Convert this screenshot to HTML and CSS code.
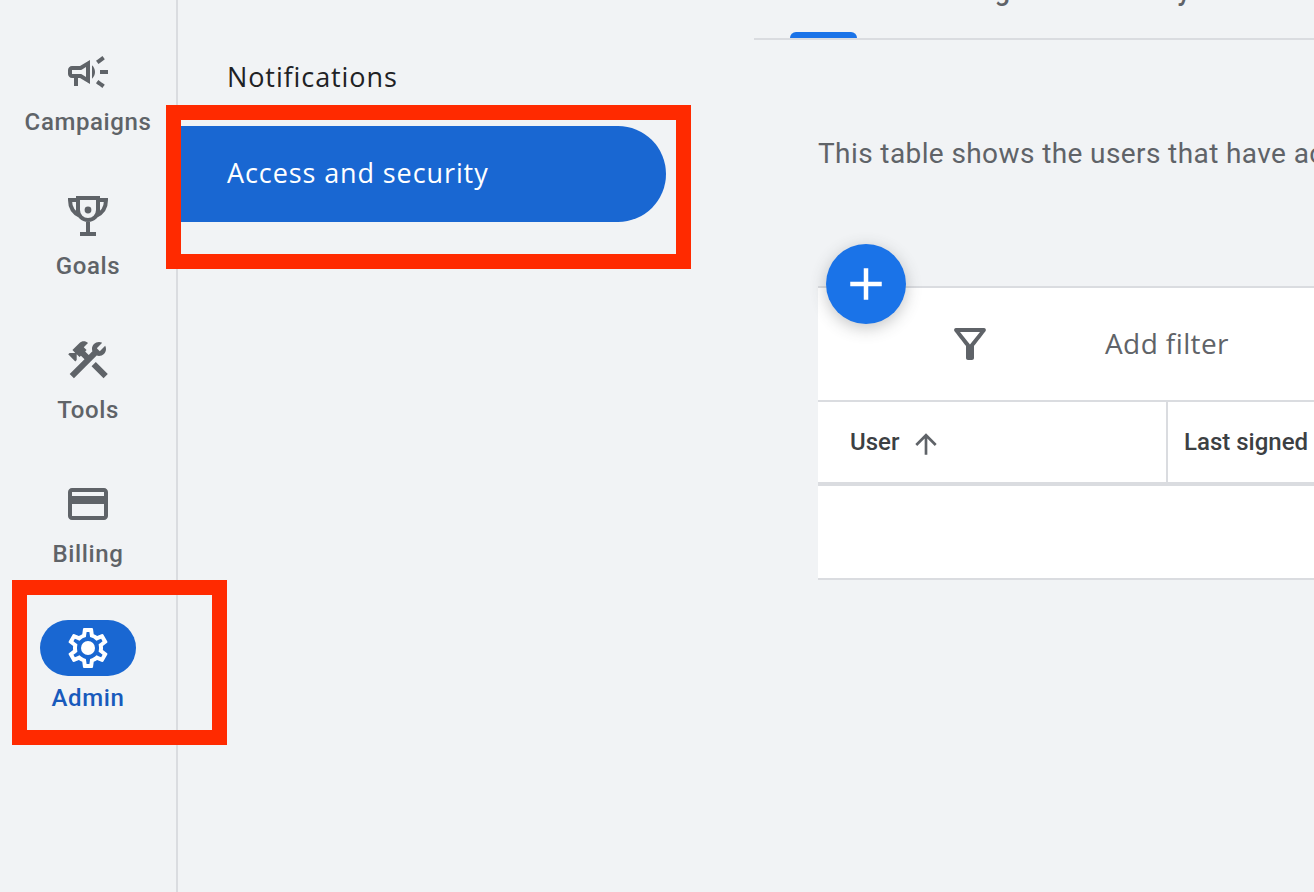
FILE: index.html
```html
<!DOCTYPE html>
<html lang="en">
<head>
    <meta charset="UTF-8">
    <meta name="viewport" content="width=device-width, initial-scale=1.0">
    <title>Access and security</title>
    <link rel="stylesheet" href="styles.css">
</head>
<body>
    <nav class="rail">
        <div class="rail-item">
            <div class="rail-icon">
                <svg class="icon" viewBox="0 0 24 24"><path d="M18 11v2h4v-2h-4zm-2 6.61c.96.71 2.21 1.65 3.2 2.39.4-.53.8-1.07 1.2-1.6-.99-.74-2.24-1.68-3.2-2.4-.4.54-.8 1.08-1.2 1.61zM20.4 5.6c-.4-.53-.8-1.07-1.2-1.6-.99.74-2.24 1.68-3.2 2.4.4.53.8 1.07 1.2 1.6.96-.72 2.21-1.65 3.2-2.4zM4 9c-1.1 0-2 .9-2 2v2c0 1.1.9 2 2 2h1v4h2v-4h1l5 3V6L8 9H4zm5.03 1.71L11 9.53v4.94l-1.97-1.18-.48-.29H4v-2h4.55l.48-.29zM15.5 12c0-1.33-.58-2.53-1.5-3.35v6.69c.92-.81 1.5-2.01 1.5-3.34z"/></svg>
            </div>
            <div class="rail-label">Campaigns</div>
        </div>
        <div class="rail-item">
            <div class="rail-icon">
                <svg class="icon" viewBox="0 0 24 24"><path class="trophy" d="M7 3h10v6c0 2.8-2.2 5-5 5s-5-2.2-5-5zM7 4H3c0 3.6 1.6 6.4 5 8M17 4h4c0 3.6-1.6 6.4-5 8M12 14v7M8 21h8"/><circle cx="12" cy="9" r="1.7"/></svg>
            </div>
            <div class="rail-label">Goals</div>
        </div>
        <div class="rail-item">
            <div class="rail-icon">
                <svg class="icon" viewBox="0 0 24 24"><path d="M13.783 15.172l2.121-2.121 5.996 5.996-2.121 2.121zM17.5 10c1.93 0 3.5-1.57 3.5-3.5 0-.58-.16-1.12-.41-1.6l-2.7 2.7-1.49-1.49 2.7-2.7c-.48-.25-1.02-.41-1.6-.41C15.57 3 14 4.57 14 6.5c0 .41.08.8.21 1.16l-1.85 1.85-1.78-1.78.71-.71-1.41-1.41L12 3.49c-1.17-1.17-3.07-1.17-4.24 0L4.22 7.03l1.41 1.41H2.81l-.71.71 3.54 3.54.71-.71V9.15l1.41 1.41.71-.71 1.78 1.78-7.41 7.41 2.12 2.12L16.34 9.79c.36.13.75.21 1.16.21z"/></svg>
            </div>
            <div class="rail-label">Tools</div>
        </div>
        <div class="rail-item">
            <div class="rail-icon">
                <svg class="icon" viewBox="0 0 24 24"><path d="M20 4H4c-1.11 0-1.99.89-1.99 2L2 18c0 1.11.89 2 2 2h16c1.11 0 2-.89 2-2V6c0-1.11-.89-2-2-2zm0 14H4v-6h16v6zm0-10H4V6h16v2z"/></svg>
            </div>
            <div class="rail-label">Billing</div>
        </div>
        <div class="rail-item active">
            <div class="rail-icon">
                <svg class="icon" viewBox="0 0 24 24"><path d="M19.43 12.98c.04-.32.07-.64.07-.98 0-.34-.03-.66-.07-.98l2.11-1.65c.19-.15.24-.42.12-.64l-2-3.46c-.09-.16-.26-.25-.44-.25-.06 0-.12.01-.17.03l-2.49 1c-.52-.4-1.08-.73-1.69-.98l-.38-2.65C14.46 2.18 14.25 2 14 2h-4c-.25 0-.46.18-.49.42l-.38 2.65c-.61.25-1.17.59-1.69.98l-2.49-1c-.06-.02-.12-.03-.18-.03-.17 0-.34.09-.43.25l-2 3.46c-.13.22-.07.49.12.64l2.11 1.65c-.04.32-.07.65-.07.98 0 .33.03.66.07.98l-2.11 1.65c-.19.15-.24.42-.12.64l2 3.46c.09.16.26.25.44.25.06 0 .12-.01.17-.03l2.49-1c.52.4 1.08.73 1.69.98l.38 2.65c.03.24.24.42.49.42h4c.25 0 .46-.18.49-.42l.38-2.65c.61-.25 1.17-.59 1.69-.98l2.49 1c.06.02.12.03.18.03.17 0 .34-.09.43-.25l2-3.46c.12-.22.07-.49-.12-.64l-2.11-1.65zm-1.98-1.71c.04.31.05.52.05.73 0 .21-.02.43-.05.73l-.14 1.13.89.7 1.08.84-.7 1.21-1.27-.51-1.04-.42-.9.68c-.43.32-.84.56-1.25.73l-1.06.43-.16 1.13-.2 1.35h-1.4l-.19-1.35-.16-1.13-1.06-.43c-.43-.18-.83-.41-1.23-.71l-.91-.7-1.06.43-1.27.51-.7-1.21 1.08-.84.89-.7-.14-1.13c-.03-.31-.05-.54-.05-.74s.02-.43.05-.73l.14-1.13-.89-.7-1.08-.84.7-1.21 1.27.51 1.04.42.9-.68c.43-.32.84-.56 1.25-.73l1.06-.43.16-1.13.2-1.35h1.39l.19 1.35.16 1.13 1.06.43c.43.18.83.41 1.23.71l.91.7 1.06-.43 1.27-.51.7 1.21-1.07.85-.89.7.14 1.13z"/><circle cx="12" cy="12" r="3.5"/></svg>
            </div>
            <div class="rail-label">Admin</div>
        </div>
    </nav>

    <aside class="side">
        <div class="side-item">Notifications</div>
        <div class="side-item selected">Access and security</div>
    </aside>

    <main class="main">
        <div class="tabs">
            <div class="tab current">Users</div>
            <div class="tab">Manage</div>
            <div class="tab">Security</div>
        </div>
        <div class="content">
            <p class="desc">This table shows the users that have access to this account</p>
            <div class="card">
                <button class="fab">
                    <svg class="fab-icon" viewBox="0 0 24 24"><path d="M19 13h-6v6h-2v-6H5v-2h6V5h2v6h6v2z"/></svg>
                </button>
                <div class="toolbar">
                    <svg class="icon filter-icon" viewBox="0 0 24 24"><path d="M7 6h10l-5.01 6.3L7 6zm-2.75-.39C6.27 8.2 10 13 10 13v6c0 .55.45 1 1 1h2c.55 0 1-.45 1-1v-6s3.72-4.8 5.74-7.39c.51-.66.04-1.61-.79-1.61H5.04c-.83 0-1.3.95-.79 1.61z"/></svg>
                    <span class="add-filter">Add filter</span>
                </div>
                <div class="table-head">
                    <div class="col col-user">User
                        <svg class="sort-icon" viewBox="0 0 24 24"><path d="M4 12l1.41 1.41L11 7.83V20h2V7.83l5.58 5.59L20 12l-8-8-8 8z"/></svg>
                    </div>
                    <div class="col col-last">Last signed in</div>
                </div>
                <div class="table-row"></div>
            </div>
        </div>
    </main>

    <!-- red annotation boxes -->
    <div class="mark mark-side"></div>
    <div class="mark mark-admin"></div>
</body>
</html>
```

FILE: styles.css
```css
html, body {
    height: 100%;
}
body {
    margin: 0;
    display: flex;
    overflow: hidden;
    background-color: #f1f3f5;
    font-family: Roboto, sans-serif;
    color: #5f6368;
}
.icon {
    width: 48px;
    height: 48px;
    fill: #5f6368;
    display: block;
}

/* left rail */
.rail {
    width: 176px;
    flex: none;
    padding-top: 44px;
    border-right: 2px solid #dadce0;
}
.rail-item {
    height: 144px;
    display: flex;
    flex-direction: column;
    align-items: center;
}
.rail-icon {
    width: 96px;
    height: 56px;
    border-radius: 28px;
    display: flex;
    align-items: center;
    justify-content: center;
}
.rail-label {
    margin-top: 6px;
    font-size: 24px;
    line-height: 32px;
    font-weight: 500;
    letter-spacing: 0.6px;
}
.rail-item.active .rail-icon {
    background-color: #1967d2;
}
.rail-item.active .icon {
    fill: #fff;
}
.rail-item.active .rail-label {
    color: #185abc;
}
.trophy {
    fill: none;
    stroke: #5f6368;
    stroke-width: 2;
}

/* second column */
.side {
    width: 576px;
    flex: none;
    padding-top: 30px;
    box-sizing: border-box;
}
.side-item {
    width: 488px;
    height: 96px;
    box-sizing: border-box;
    padding: 0 0 3px 49px;
    display: flex;
    align-items: center;
    font-family: "Open Sans", sans-serif;
    font-size: 27px;
    font-weight: 500;
    letter-spacing: 0.9px;
    color: #202124;
}
.side-item.selected {
    background-color: #1967d2;
    color: #fff;
    border-radius: 0 48px 48px 0;
}

/* main */
.main {
    flex: 1;
    min-width: 0;
}
.tabs {
    height: 38px;
    display: flex;
    padding-left: 36px;
    border-bottom: 2px solid #dadce0;
}
.tab {
    position: relative;
    height: 38px;
    margin-right: 72px;
    margin-top: -27px;
    font-size: 27px;
    line-height: 36px;
    font-weight: 500;
    letter-spacing: -0.5px;
    white-space: nowrap;
}
.tab.current {
    color: #1a73e8;
}
.tab.current::after {
    content: "";
    position: absolute;
    left: 0;
    right: 0;
    bottom: -27px;
    height: 6px;
    background-color: #1a73e8;
    border-radius: 6px 6px 0 0;
}
.content {
    margin-left: 64px;
}
.desc {
    margin: 94px 0 0;
    height: 152px;
    font-size: 28px;
    line-height: 40px;
    letter-spacing: 0.4px;
    white-space: nowrap;
}
.card {
    position: relative;
    background-color: #fff;
    border-top: 2px solid #dadce0;
    border-bottom: 2px solid #dadce0;
}
.fab {
    position: absolute;
    left: 8px;
    top: -44px;
    width: 80px;
    height: 80px;
    padding: 0;
    border: none;
    border-radius: 50%;
    background-color: #1a73e8;
    box-shadow: 0 4px 16px rgba(60, 64, 67, 0.3);
    display: flex;
    align-items: center;
    justify-content: center;
}
.fab-icon {
    width: 54px;
    height: 54px;
    fill: #fff;
}
.toolbar {
    height: 112px;
    display: flex;
    align-items: center;
    padding-left: 128px;
    border-bottom: 2px solid #dadce0;
}
.add-filter {
    margin-left: 111px;
    font-family: "Open Sans", sans-serif;
    font-size: 28px;
    letter-spacing: 0.4px;
    padding-bottom: 2px;
}
.table-head {
    height: 80px;
    display: flex;
    border-bottom: 4px solid #dadce0;
    font-size: 24px;
    font-weight: 500;
    color: #3c4043;
}
.col {
    display: flex;
    align-items: center;
    white-space: nowrap;
}
.col-user {
    width: 350px;
    flex: none;
    padding-left: 32px;
    box-sizing: border-box;
    border-right: 2px solid #dadce0;
}
.col-last {
    padding-left: 16px;
}
.sort-icon {
    width: 32px;
    height: 32px;
    margin: 4px 0 0 11px;
    fill: #5f6368;
}
.table-row {
    height: 92px;
}

/* annotation boxes */
.mark {
    position: absolute;
    box-sizing: border-box;
    border: 15px solid #ff2a00;
}
.mark-side {
    left: 166px;
    top: 105px;
    width: 525px;
    height: 164px;
}
.mark-admin {
    left: 12px;
    top: 580px;
    width: 215px;
    height: 165px;
}
```
